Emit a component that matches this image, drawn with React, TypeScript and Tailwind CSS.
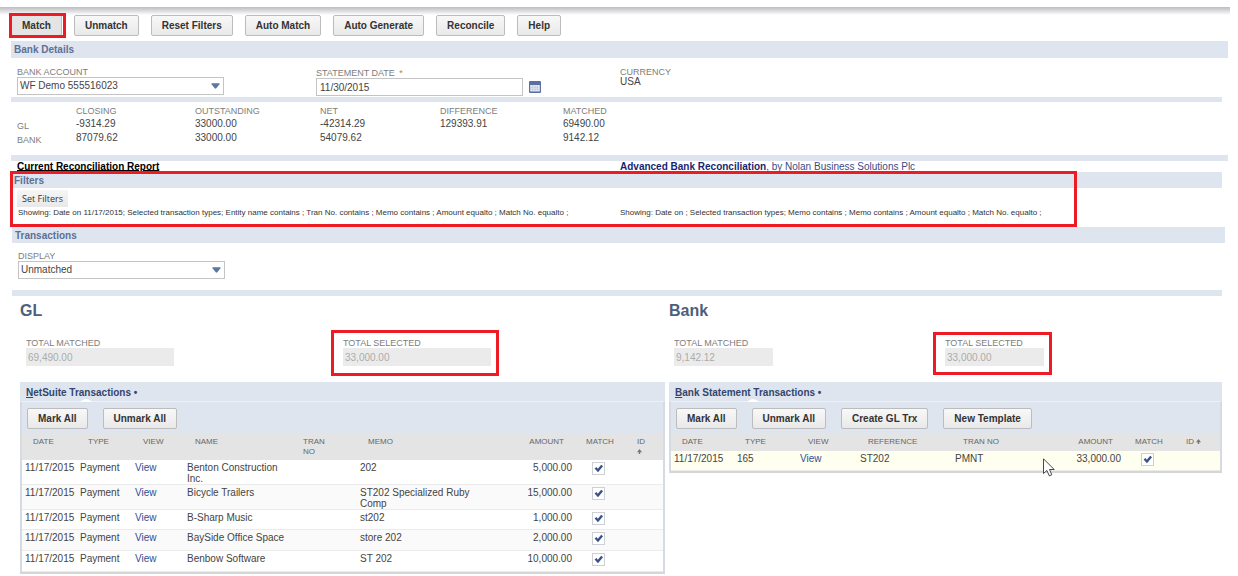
import { useState } from "react";
import type { ReactNode } from "react";
import clsx from "clsx";

type Column = {
  label: string;
  width: string;
  align?: "right";
  sort?: "inline" | "below";
};

const glColumns: Column[] = [
  { label: "DATE", width: "w-[55px]" },
  { label: "TYPE", width: "w-[55px]" },
  { label: "VIEW", width: "w-[52px]" },
  { label: "NAME", width: "w-[108px]" },
  { label: "TRAN NO", width: "w-[65px]" },
  { label: "MEMO", width: "" },
  { label: "AMOUNT", width: "w-[83px]", align: "right" },
  { label: "MATCH", width: "w-[51px]" },
  { label: "ID", width: "w-[37px]", sort: "below" },
];

const bankColumns: Column[] = [
  { label: "DATE", width: "w-[63px]" },
  { label: "TYPE", width: "w-[63px]" },
  { label: "VIEW", width: "w-[60px]" },
  { label: "REFERENCE", width: "w-[95px]" },
  { label: "TRAN NO", width: "" },
  { label: "AMOUNT", width: "w-[67px]", align: "right" },
  { label: "MATCH", width: "w-[51px]" },
  { label: "ID", width: "w-[45px]", sort: "inline" },
];

const glRows = [
  { name: "Benton Construction Inc.", memo: "202", amount: "5,000.00", height: "h-[25px]" },
  { name: "Bicycle Trailers", memo: "ST202 Specialized Ruby Comp", amount: "15,000.00", height: "h-[25px]" },
  { name: "B-Sharp Music", memo: "st202", amount: "1,000.00", height: "h-[20px]" },
  { name: "BaySide Office Space", memo: "store 202", amount: "2,000.00", height: "h-[21px]" },
  { name: "Benbow Software", memo: "ST 202", amount: "10,000.00", height: "h-[21px]" },
];

const toolbar = ["Unmatch", "Reset Filters", "Auto Match", "Auto Generate", "Reconcile", "Help"];

function Button({ children, active }: { children: ReactNode; active?: boolean }) {
  return (
    <button
      type="button"
      className={clsx(
        "h-[21px] shrink-0 whitespace-nowrap rounded-xs border border-[#bcbcbc] px-[10px] text-[10px] font-bold leading-[19px] text-[#333]",
        active ? "bg-[#e4e4e4]" : "bg-linear-to-b from-[#f8f8f8] to-[#e9e9e9]",
      )}
    >
      {children}
    </button>
  );
}

// Red call-out frame laid over whatever it wraps
function Highlight({ className }: { className: string }) {
  return <div className={clsx("pointer-events-none absolute z-10 border-3 border-[#ed1c24]", className)} />;
}

function SectionBar({ title, className }: { title: string; className?: string }) {
  return (
    <h2 className={clsx("bg-[#dfe5ef] px-[3px] text-[10px] font-bold leading-[18px] text-[#5c7096]", className)}>
      {title}
    </h2>
  );
}

function SelectField({ id, label, value }: { id: string; label: string; value: string }) {
  return (
    <div className="w-[207px]">
      <label htmlFor={id} className="block text-[9px] leading-[10px] text-[#7d7d7d]">
        {label}
      </label>
      <div className="relative">
        <select
          id={id}
          className="block h-[18px] w-full appearance-none border border-[#c4c4c4] bg-white pl-[2px] text-[10px] leading-4 text-[#444]"
        >
          <option>{value}</option>
        </select>
        <svg viewBox="0 0 9 6" className="pointer-events-none absolute right-1 top-[6px] h-[6px] w-[9px]">
          <path d="M1 0.3h7q1 0.2 0.5 1L5.3 5.3q-0.8 0.8-1.6 0L0.5 1.3Q0 0.5 1 0.3z" fill="#5d76a0" />
        </svg>
      </div>
    </div>
  );
}

function TotalField({
  id,
  label,
  value,
  width,
  highlight,
}: {
  id: string;
  label: string;
  value: string;
  width: string;
  highlight?: string;
}) {
  return (
    <div className={clsx("relative", width)}>
      {highlight && <Highlight className={highlight} />}
      <label htmlFor={id} className="block text-[9px] leading-[10px] text-[#7d7d7d]">
        {label}
      </label>
      <input
        id={id}
        value={value}
        disabled
        readOnly
        className="block h-[18px] w-full bg-[#ebebeb] px-[2px] text-[10px] text-[#ababab]"
      />
    </div>
  );
}

function MatchBox({ label }: { label: string }) {
  const [checked, setChecked] = useState(true);
  return (
    <span className="relative block size-[13px]">
      <input
        type="checkbox"
        aria-label={label}
        checked={checked}
        onChange={(e) => setChecked(e.target.checked)}
        className="block size-[13px] appearance-none border border-[#cdd0d5] bg-white"
      />
      {checked && (
        <svg viewBox="0 0 13 13" className="pointer-events-none absolute inset-0 size-[13px]">
          <path d="M2.6 6.6L4.4 5L5.8 6.8L9.2 2.8L11 4.2L6 10.2z" fill="#3a5088" />
        </svg>
      )}
    </span>
  );
}

function SortArrow() {
  return (
    <svg viewBox="0 0 5 5" className="inline-block size-[5px]">
      <path d="M2.5 0L5 3.2H3.2V5H1.8V3.2H0z" fill="#777" />
    </svg>
  );
}

function TableHead({ columns, height }: { columns: Column[]; height: string }) {
  return (
    <thead>
      <tr className={clsx("bg-[#e4e4e4] align-top", height)}>
        {columns.map((col) => (
          <th
            key={col.label}
            scope="col"
            className={clsx(
              "pt-[3px] text-[8px] font-normal leading-[10px] text-[#666]",
              col.width,
              col.align === "right" ? "pr-[11px] text-right" : "pl-[11px] text-left",
              // narrow column, its heading breaks over two lines
              col.width === "w-[65px]" && "pr-[20px]",
            )}
          >
            {col.label}
            {col.sort === "below" && <br />}
            {col.sort === "inline" && " "}
            {col.sort && <SortArrow />}
          </th>
        ))}
      </tr>
    </thead>
  );
}

function Panel({
  first,
  title,
  buttons,
  notch,
  children,
}: {
  first: string;
  title: string;
  buttons: string[];
  notch: string;
  children: ReactNode;
}) {
  return (
    <section className="relative mt-4">
      <h4 className="h-[19px] bg-[#dfe5ef] pl-[6px] text-[10px] font-bold leading-[21px] text-[#33456b]">
        <span className="underline">{first}</span>
        {title} •
      </h4>
      <svg viewBox="0 0 12 3" className={clsx("absolute top-[17px] h-[3px] w-3", notch)}>
        <path d="M0 3Q6-3 12 3z" fill="#fff" />
      </svg>
      <div className="border-x-2 border-b-2 border-t border-b-[#d6d6d6] border-t-[#edf1f7] border-x-[#d6dae2]">
        <div className="flex h-8 items-center gap-[15px] bg-[#dfe5ef] px-[5px]">
          {buttons.map((b) => (
            <Button key={b}>{b}</Button>
          ))}
        </div>
        {children}
      </div>
    </section>
  );
}

const rule = "border-b border-[#ebebeb]";
const cell = clsx(rule, "px-[3px] pt-[2px]");

export default function App() {
  return (
    <main className="min-w-[1180px] bg-white pt-[7px] font-['Liberation_Sans',Arial,sans-serif] text-[10px] text-[#444]">
      <div className="mr-2 h-2 bg-linear-to-b from-[#bcbcc1] to-white" />

      <div className="pl-[11px] pr-[10px]">
        {/* Toolbar */}
        <div className="flex h-[26px] gap-3">
          <div className="relative h-[21px]">
            <Button active>Match</Button>
            <Highlight className="-bottom-[2px] -left-[2px] -right-1 -top-[2px]" />
          </div>
          {toolbar.map((name) => (
            <Button key={name}>{name}</Button>
          ))}
        </div>

        {/* Bank details */}
        <SectionBar title="Bank Details" className="h-[17px]" />
        <div className="grid h-[39px] grid-cols-[299px_304px_1fr] pl-[6px]">
          <div className="pt-[9px]">
            <SelectField id="bank-account" label="BANK ACCOUNT" value="WF Demo 555516023" />
          </div>
          <div className="pt-[10px]">
            <label htmlFor="statement-date" className="block text-[9px] leading-[10px] text-[#7d7d7d]">
              STATEMENT DATE <span className="pl-[2px] text-[#a58a4a]">*</span>
            </label>
            <div className="flex items-center gap-[6px]">
              <input
                id="statement-date"
                defaultValue="11/30/2015"
                className="h-[18px] w-[207px] border border-[#c4c4c4] bg-white px-[3px] text-[10px] text-[#444]"
              />
              <button type="button" aria-label="Pick a date">
                <svg viewBox="0 0 12 12" className="block size-3">
                  <rect x="0" y="0" width="12" height="12" rx="1" fill="#5a70a0" />
                  <rect x="1.2" y="4" width="9.6" height="6.4" fill="#e9eef8" />
                  <path d="M1.2 6.2h9.6M1.2 8.3h9.6M3.6 4v6.4M6 4v6.4M8.4 4v6.4" stroke="#b4c0da" strokeWidth="0.6" />
                </svg>
              </button>
            </div>
          </div>
          <div className="pt-[9px] leading-[10px]">
            <div className="text-[9px] text-[#7d7d7d]">CURRENCY</div>
            <div>USA</div>
          </div>
        </div>

        <div className="mr-[6px] h-[5px] bg-[#dfe5ef]" />
        <div className="h-[53px] pl-[6px] pt-1">
          <table className="table-fixed border-collapse text-left leading-[14px]">
            <thead>
              <tr className="text-[9px] leading-[11px] text-[#7d7d7d]">
                <td className="w-[59px]" />
                <th className="w-[119px] font-normal">CLOSING</th>
                <th className="w-[125px] font-normal">OUTSTANDING</th>
                <th className="w-[120px] font-normal">NET</th>
                <th className="w-[123px] font-normal">DIFFERENCE</th>
                <th className="w-[80px] font-normal">MATCHED</th>
              </tr>
            </thead>
            <tbody>
              <tr>
                <th className="pt-1 text-[9px] font-normal leading-[10px] text-[#7d7d7d]">GL</th>
                <td>-9314.29</td>
                <td>33000.00</td>
                <td>-42314.29</td>
                <td>129393.91</td>
                <td>69490.00</td>
              </tr>
              <tr>
                <th className="pt-1 text-[9px] font-normal leading-[10px] text-[#7d7d7d]">BANK</th>
                <td>87079.62</td>
                <td>33000.00</td>
                <td>54079.62</td>
                <td />
                <td>9142.12</td>
              </tr>
            </tbody>
          </table>
        </div>
        <div className="h-[6px] bg-[#dfe5ef]" />
        <div className="grid h-[11px] grid-cols-[603px_1fr] pl-[6px] leading-[11px]">
          <div>
            <a href="#report" className="font-bold text-black underline decoration-1 underline-offset-0">
              Current Reconciliation Report
            </a>
          </div>
          <div>
            <a href="#about" className="text-[#3b4a86]">
              <b className="text-[#1a1f71]">Advanced Bank Reconciliation</b>, by Nolan Business Solutions Plc
            </a>
          </div>
        </div>

        {/* Filters */}
        <section className="relative h-[55px]">
          <Highlight className="-left-px -top-px bottom-0 right-[151px]" />
          <SectionBar title="Filters" className="mr-[6px] h-4" />
          <div className="pl-[6px] pt-[2px]">
            <button
              type="button"
              className="block h-[17px] bg-linear-to-b from-[#f6f6f6] to-[#e8e8e8] px-[5px] font-['Open_Sans','Noto_Sans',sans-serif] text-[9px] leading-[17px] text-[#333]"
            >
              Set Filters
            </button>
            <div className="grid grid-cols-[603px_1fr] pt-px text-[8px] leading-[10px] text-[#333]">
              <p className="pl-px">
                Showing: Date on 11/17/2015; Selected transaction types; Entity name contains ; Tran No. contains ; Memo
                contains ; Amount equalto ; Match No. equalto ;
              </p>
              <p>
                Showing: Date on ; Selected transaction types; Memo contains ; Memo contains ; Amount equalto ; Match No.
                equalto ;
              </p>
            </div>
          </div>
        </section>

        {/* Transactions */}
        <SectionBar title="Transactions" className="ml-px mr-[3px] h-4" />
        <div className="h-[47px] pl-[7px] pt-2">
          <SelectField id="display" label="DISPLAY" value="Unmatched" />
        </div>
        <div className="ml-px mr-[6px] h-[6px] bg-[#dfe5ef]" />

        <div className="grid grid-cols-[645fr_553fr] items-start gap-1 pl-[9px] pr-[6px] pt-1">
          <section className="min-w-0">
            <h3 className="h-[38px] text-[16px] font-bold leading-[22px] text-[#4d5f7c]">GL</h3>
            <div className="flex gap-[169px] pl-[6px]">
              <TotalField id="gl-matched" label="TOTAL MATCHED" value="69,490.00" width="w-[148px]" />
              <TotalField
                id="gl-selected"
                label="TOTAL SELECTED"
                value="33,000.00"
                width="w-[148px]"
                highlight="-bottom-[10px] -left-3 -right-2 -top-2"
              />
            </div>
            <Panel first="N" title="etSuite Transactions" buttons={["Mark All", "Unmark All"]} notch="left-[60px]">
              <table className="w-full table-fixed border-separate border-spacing-0 leading-[11px]">
                <TableHead columns={glColumns} height="h-[26px]" />
                <tbody>
                  {glRows.map((row) => (
                    <tr key={row.name} className={clsx("align-top even:bg-[#fafafa]", row.height)}>
                      <td className={cell}>11/17/2015</td>
                      <td className={cell}>Payment</td>
                      <td className={cell}>
                        <a href="#view" className="text-[#2f4f92]">
                          View
                        </a>
                      </td>
                      <td className={cell}>{row.name}</td>
                      <td className={cell} />
                      <td className={cell}>{row.memo}</td>
                      <td className={clsx(cell, "text-right")}>{row.amount}</td>
                      <td className={clsx(rule, "pl-[17px] pt-[2px]")}>
                        <MatchBox label={`Match ${row.name}`} />
                      </td>
                      <td className={rule} />
                    </tr>
                  ))}
                </tbody>
              </table>
            </Panel>
          </section>

          <section className="min-w-0">
            <h3 className="h-[38px] text-[16px] font-bold leading-[22px] text-[#4d5f7c]">Bank</h3>
            <div className="flex gap-[172px] pl-[5px]">
              <TotalField id="bank-matched" label="TOTAL MATCHED" value="9,142.12" width="w-[99px]" />
              <TotalField
                id="bank-selected"
                label="TOTAL SELECTED"
                value="33,000.00"
                width="w-[99px]"
                highlight="-bottom-[9px] -left-3 -right-2 -top-[6px]"
              />
            </div>
            <Panel
              first="B"
              title="ank Statement Transactions"
              buttons={["Mark All", "Unmark All", "Create GL Trx", "New Template"]}
              notch="left-[78px]"
            >
              <table className="w-full table-fixed border-separate border-spacing-0 leading-[11px]">
                <TableHead columns={bankColumns} height="h-[17px]" />
                <tbody>
                  <tr className="h-5 bg-[#fffff0] align-top">
                    <td className={cell}>11/17/2015</td>
                    <td className={cell}>165</td>
                    <td className={cell}>
                      <a href="#view" className="text-[#2f4f92]">
                        View
                      </a>
                    </td>
                    <td className={cell}>ST202</td>
                    <td className={cell}>PMNT</td>
                    <td className={clsx(cell, "text-right")}>33,000.00</td>
                    <td className={clsx(rule, "pl-[17px] pt-[2px]")}>
                      <MatchBox label="Match ST202" />
                    </td>
                    <td className={rule} />
                  </tr>
                </tbody>
              </table>
              {/* Mouse pointer */}
              <svg viewBox="0 0 12 19" className="pointer-events-none absolute right-[167px] top-[76px] h-[19px] w-3">
                <path
                  d="M0.5 0.8V15.6L3.9 12.4L6.3 17.9L8.8 16.8L6.5 11.5H11.2z"
                  fill="#fff"
                  stroke="#333"
                  strokeWidth="0.9"
                />
              </svg>
            </Panel>
          </section>
        </div>
      </div>
    </main>
  );
}
